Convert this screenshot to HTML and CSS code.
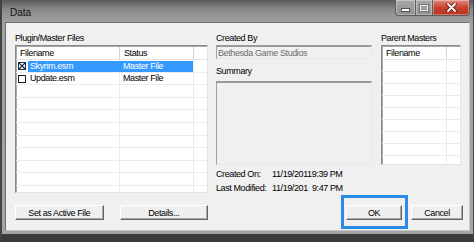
FILE: index.html
```html
<!DOCTYPE html>
<html lang="en">
<head>
    <meta charset="UTF-8">
    <meta name="viewport" content="width=device-width, initial-scale=1.0">
    <title>Data</title>
    <link rel="stylesheet" href="styles.css">
</head>
<body>
    <div class="window">
        <div class="titlebar">
            <span class="title">Data</span>
            <div class="caption-buttons">
                <span class="cap cap-min"><span class="min-bar"></span></span>
                <span class="cap cap-max"><span class="max-box"></span></span>
                <span class="cap cap-close">
                    <svg width="11" height="9" viewBox="0 0 11 9">
                        <path d="M2 1 L9 8 M9 1 L2 8" stroke="#4a1a14" stroke-width="3.4" stroke-linecap="round"/>
                        <path d="M2 1 L9 8 M9 1 L2 8" stroke="#ffffff" stroke-width="1.8" stroke-linecap="round"/>
                    </svg>
                </span>
            </div>
        </div>

        <div class="client">
            <!-- plugin list -->
            <div class="col-left">
                <div class="label">Plugin/Master Files</div>
                <div class="listview files">
                    <div class="lv-header">
                        <span class="hd hd-name">Filename</span>
                        <span class="hd hd-status">Status</span>
                        <span class="hd hd-fill"></span>
                    </div>
                    <div class="lv-body">
                        <div class="lv-row">
                            <span class="check checked">
                                <svg width="8" height="8" viewBox="0 0 8 8">
                                    <rect x="0.5" y="0.5" width="7" height="7" fill="#fff" stroke="#1c2a4a"/>
                                    <path d="M1 1 L7 7 M7 1 L1 7" stroke="#1c2a4a" stroke-width="1.2"/>
                                </svg>
                            </span>
                            <span class="cells selected">
                                <span class="cell-name">Skyrim.esm</span>
                                <span class="cell-status">Master File</span>
                            </span>
                        </div>
                        <div class="lv-row">
                            <span class="check">
                                <svg width="8" height="8" viewBox="0 0 8 8">
                                    <rect x="0.5" y="0.5" width="7" height="7" fill="#fff" stroke="#1c1c1c"/>
                                </svg>
                            </span>
                            <span class="cells">
                                <span class="cell-name">Update.esm</span>
                                <span class="cell-status">Master File</span>
                            </span>
                        </div>
                    </div>
                </div>
                <div class="btn-row">
                    <button class="btn btn-wide">Set as Active File</button>
                    <button class="btn btn-wide">Details...</button>
                </div>
            </div>

            <div class="col-right">
                <div class="top">
                    <div class="col-mid">
                        <div class="label">Created By</div>
                        <div class="textbox">Bethesda Game Studios</div>
                        <div class="label label-summary">Summary</div>
                        <div class="summary"></div>
                    </div>
                    <div class="col-parent">
                        <div class="label">Parent Masters</div>
                        <div class="listview masters">
                            <div class="lv-header">
                                <span class="hd hd-master">Filename</span>
                                <span class="hd hd-fill"></span>
                            </div>
                            <div class="lv-body"></div>
                        </div>
                    </div>
                </div>

                <div class="dates">
                    <div class="date-row"><span class="date-label">Created On:</span><span>11/19/20119:39 PM</span></div>
                    <div class="date-row"><span class="date-label">Last Modified:</span><span>11/19/201&nbsp;&nbsp;9:47 PM</span></div>
                </div>

                <div class="actions">
                    <button class="btn btn-ok">OK</button>
                    <button class="btn btn-cancel">Cancel</button>
                </div>
            </div>
        </div>
    </div>
</body>
</html>
```

FILE: styles.css
```css
body {
    margin: 0;
    background: #383838;
    font-family: "Liberation Sans", Arial, sans-serif;
    font-size: 9px;
    letter-spacing: -0.4px;
    color: #000;
}
.window {
    width: 474px;
    height: 242px;
    box-sizing: border-box;
    display: flex;
    flex-direction: column;
    background: linear-gradient(#5a5a5a, #8c8c8c 10px, #a0a0a0 22px, #a4a4a4);
    border-left: 2px solid #444;
    border-right: 1px solid #444;
    border-bottom: 8px solid #3c3c3c;
    padding: 0 3px 3px 3px;
}

/* title bar */
.titlebar {
    height: 22px;
    display: flex;
    align-items: flex-start;
}
.title {
    font-size: 10px;
    letter-spacing: 0;
    margin: 7px 0 0 5px;
    color: #111;
}
.caption-buttons {
    margin-left: auto;
    display: flex;
    height: 16px;
    margin-right: 0;
}
.cap {
    box-sizing: border-box;
    height: 16px;
    display: flex;
    align-items: center;
    justify-content: center;
    border: 1px solid #5c5c5c;
    border-top: none;
    box-shadow: inset 0 0 0 1px rgba(255,255,255,0.35);
}
.cap-min {
    width: 21px;
    border-radius: 0 0 0 4px;
    background: linear-gradient(#a8a8a8, #8e8e8e);
}
.cap-max {
    width: 17px;
    border-left: none;
    background: linear-gradient(#a8a8a8, #8e8e8e);
}
.cap-close {
    width: 37px;
    border-left: none;
    border-radius: 0 0 4px 0;
    background: linear-gradient(#e08a7c, #c8432f 50%, #b8321f);
}
.min-bar {
    width: 7px;
    height: 2px;
    margin-top: 5px;
    background: #fff;
    box-shadow: 0 0 0 1px #555;
}
.max-box {
    width: 6px;
    height: 4px;
    border: 1px solid #e8e8e8;
    box-shadow: 0 0 0 1px #7a7a7a;
}

/* client area */
.client {
    flex: 1;
    display: flex;
    background: #f0f0f0;
    border: 1px solid #6e6e6e;
    border-right-color: #c8c8c8;
    border-bottom-color: #c8c8c8;
    padding: 9px 8px 10px 9px;
}
.label {
    height: 13px;
    line-height: 13px;
}
.col-left {
    width: 193px;
    display: flex;
    flex-direction: column;
}
.col-right {
    margin-left: 8px;
    width: 245px;
    display: flex;
    flex-direction: column;
}
.top {
    display: flex;
    height: 133px;
}
.col-mid {
    width: 156px;
    display: flex;
    flex-direction: column;
}
.col-parent {
    margin-left: 9px;
    width: 80px;
    display: flex;
    flex-direction: column;
}

/* list views */
.listview {
    box-sizing: border-box;
    background: #fff;
    border: 1px solid #8a8a8a;
    border-right-color: #e4e4e4;
    border-bottom-color: #e4e4e4;
    box-shadow: inset 1px 1px 0 #a8a8a8;
    display: flex;
    flex-direction: column;
    overflow: hidden;
}
.files {
    height: 148px;
}
.masters {
    flex: 1;
}
.lv-header {
    display: flex;
    height: 12px;
    margin-top: 1px;
    border-bottom: 1px solid #e2e2e2;
    line-height: 12px;
}
.hd {
    box-sizing: border-box;
    border-right: 1px solid #d5d5d5;
    padding-left: 4px;
}
.hd-name {
    width: 104px;
}
.hd-status {
    width: 74px;
}
.hd-master {
    width: 65px;
}
.hd-fill {
    flex: 1;
    border-right: none;
}
.lv-body {
    flex: 1;
}
.files .lv-body {
    background:
        linear-gradient(to right, transparent 103px, #ececec 103px, #ececec 104px, transparent 104px),
        linear-gradient(to right, transparent 177px, #ececec 177px, #ececec 178px, transparent 178px),
        repeating-linear-gradient(to bottom, transparent 0, transparent 11.6px, #ececec 11.6px, #ececec 12.6px);
}
.masters .lv-body {
    background:
        linear-gradient(to right, transparent 64px, #ececec 64px, #ececec 65px, transparent 65px),
        repeating-linear-gradient(to bottom, transparent 0, transparent 11px, #ececec 11px, #ececec 12px);
}
.lv-row {
    display: flex;
    align-items: center;
    height: 12.6px;
}
.check {
    width: 8px;
    height: 8px;
    margin-left: 2px;
    display: flex;
}
.cells {
    margin-left: 2px;
    display: flex;
    height: 11px;
    line-height: 11px;
}
.cells.selected {
    background: #3399ff;
    color: #fff;
}
.cell-name {
    width: 89px;
    padding-left: 2px;
}
.cell-status {
    width: 70px;
    padding-left: 4px;
}

/* created by / summary */
.textbox {
    box-sizing: border-box;
    height: 14px;
    line-height: 12px;
    padding-left: 1px;
    color: #6d6d6d;
    border: 1px solid #a0a0a0;
    border-top: 2px solid #9a9a9a;
    border-right-color: #e8e8e8;
    border-bottom-color: #e8e8e8;
}
.label-summary {
    margin-top: 6px;
}
.summary {
    flex: 1;
    margin-top: 3px;
    border: 1px solid #a0a0a0;
    border-top: 2px solid #9a9a9a;
    border-right-color: #e8e8e8;
    border-bottom-color: #e8e8e8;
}

.dates {
    margin-top: 2px;
}
.date-row {
    display: flex;
    height: 14px;
    line-height: 14px;
}
.date-label {
    width: 56px;
}

/* buttons */
.btn {
    box-sizing: border-box;
    height: 15px;
    padding: 0;
    font-family: inherit;
    font-size: 9px;
    letter-spacing: -0.4px;
    color: #000;
    background: #efefef;
    border: 1px solid #fff;
    border-right-color: #646464;
    border-bottom-color: #646464;
    box-shadow: inset -1px -1px 0 #a8a8a8;
}
.btn-row {
    margin-top: 12px;
    display: flex;
    gap: 16px;
}
.btn-wide {
    width: 89px;
}
.actions {
    margin-top: 10px;
    margin-right: -2px;
    display: flex;
    justify-content: flex-end;
    gap: 9px;
}
.btn-ok {
    width: 56px;
    position: relative;
}
.btn-ok::after {
    content: "";
    position: absolute;
    left: -6px;
    right: -7px;
    top: -11px;
    bottom: -10px;
    border: 3px solid #2a8be6;
}
.btn-cancel {
    width: 52px;
}
```
